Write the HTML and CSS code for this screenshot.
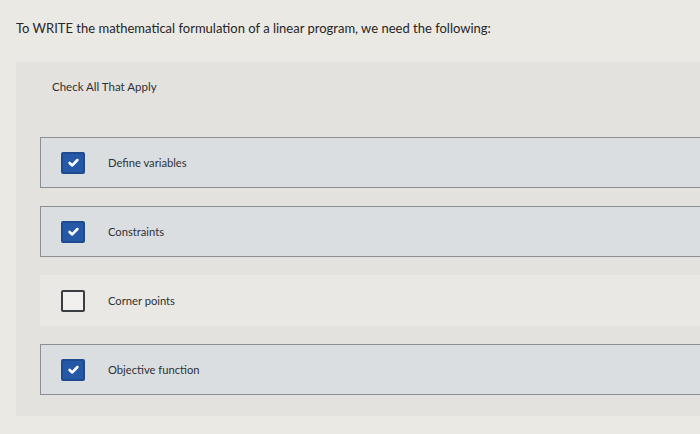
FILE: index.html
```html
<!DOCTYPE html>
<html>
<head>
<meta charset="utf-8">
<link rel="stylesheet" href="styles.css">
</head>
<body>
<div class="page">
  <p class="question">To WRITE the mathematical formulation of a linear program, we need the following:</p>
  <div class="panel">
    <div class="instr">Check All That Apply</div>
    <div class="options">
      <div class="option checked">
        <span class="box"><svg viewBox="0 0 12 12" width="13" height="13"><path d="M2.4 6.4 L4.9 8.7 L9.6 3.7" fill="none" stroke="#fff" stroke-width="2.4" stroke-linecap="round" stroke-linejoin="round"/></svg></span>
        <span class="label">Define variables</span>
      </div>
      <div class="option checked">
        <span class="box"><svg viewBox="0 0 12 12" width="13" height="13"><path d="M2.4 6.4 L4.9 8.7 L9.6 3.7" fill="none" stroke="#fff" stroke-width="2.4" stroke-linecap="round" stroke-linejoin="round"/></svg></span>
        <span class="label">Constraints</span>
      </div>
      <div class="option">
        <span class="box"></span>
        <span class="label">Corner points</span>
      </div>
      <div class="option checked">
        <span class="box"><svg viewBox="0 0 12 12" width="13" height="13"><path d="M2.4 6.4 L4.9 8.7 L9.6 3.7" fill="none" stroke="#fff" stroke-width="2.4" stroke-linecap="round" stroke-linejoin="round"/></svg></span>
        <span class="label">Objective function</span>
      </div>
    </div>
  </div>
</div>
</body>
</html>
```
FILE: styles.css
```css
html, body {
  margin: 0;
  padding: 0;
  background: #ebe9e4;
}
.page {
  width: 700px;
  height: 434px;
  overflow: hidden;
  font-family: "Lato", "Open Sans", sans-serif;
  color: #2b2b2b;
}
.question {
  margin: 0;
  padding: 19px 0 0 16px;
  font-size: 13px;
  line-height: 18px;
  color: #262626;
}
.panel {
  margin: 25px 0 0 16px;
  background: #e3e2df;
  padding: 18px 0 21px 0;
}
.instr {
  font-size: 11.5px;
  padding-left: 36px;
  color: #303030;
}
.options {
  margin-top: 44px;
  margin-left: 24px;
  display: flex;
  flex-direction: column;
  gap: 18px;
}
.option {
  height: 51px;
  display: flex;
  align-items: center;
  box-sizing: border-box;
  background: #e9e8e5;
  border: 1px solid transparent;
  border-right: none;
}
.option.checked {
  background: #dadee1;
  border-color: #8d8f93;
}
.box {
  width: 24px;
  height: 22px;
  margin-left: 20px;
  box-sizing: border-box;
  border: 2px solid #3b3d40;
  border-radius: 2px;
  background: #f1f0ee;
  display: flex;
  align-items: center;
  justify-content: center;
}
.checked .box {
  background: #2558a6;
  border-color: #1e4a8f;
}
.label {
  margin-left: 23px;
  font-size: 11.2px;
  color: #303236;
}
```
